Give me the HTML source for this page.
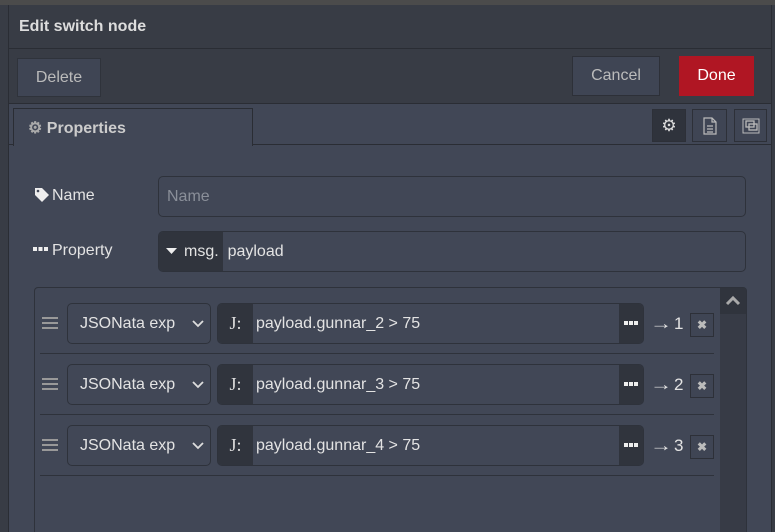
<!DOCTYPE html><html><head><style>
*{box-sizing:border-box;margin:0;padding:0}
body{width:775px;height:532px;overflow:hidden;background:#414756;font-family:"Liberation Sans",sans-serif;color:#ddd;position:relative}
.a{position:absolute}
.btn{position:absolute;border:1px solid #2d3038;background:#3f4554;color:#bbb;font-size:16px;display:flex;align-items:center;justify-content:center}
.inp{position:absolute;border:1px solid #2e323b;border-radius:5px;background:#414756}
.lbl{position:absolute;font-size:16px;color:#e3e3e3}
.sel{position:absolute;border:1px solid #2e323b;border-radius:5px;font-size:16px;color:#e3e3e3;padding-left:12px;display:flex;align-items:center}
.ib{position:absolute;border:1px solid #2d3038;background:#3f4554;display:flex;align-items:center;justify-content:center}
</style></head><body>
<div class="a" style="left:0;top:0;width:775px;height:5px;background:#4b4b4b"></div>
<div class="a" style="left:0;top:5px;width:9px;height:527px;background:#383c45;border-right:1px solid #2a2d34"></div>
<div class="a" style="left:9px;top:5px;width:762px;height:98px;background:#383c45"></div>
<div class="a" style="left:771px;top:5px;width:4px;height:527px;background:#383c45;border-left:1px solid #2a2d34"></div>
<div class="a" style="left:19px;top:18px;font-size:16px;font-weight:bold;color:#ddd">Edit switch node</div>
<div class="a" style="left:9px;top:48px;width:762px;height:1px;background:#2a2d34"></div>
<div class="btn" style="left:17px;top:58px;width:84px;height:39px;border-color:#2f333b">Delete</div>
<div class="btn" style="left:572px;top:56px;width:88px;height:40px">Cancel</div>
<div class="btn" style="left:679px;top:56px;width:75px;height:40px;background:#b01623;border-color:#b01623;color:#fff">Done</div>
<div class="a" style="left:9px;top:103px;width:762px;height:1px;background:#2a2d34"></div>
<div class="a" style="left:9px;top:144px;width:762px;height:1px;background:#2a2d34"></div>
<div class="a" style="left:13px;top:108px;width:240px;height:38px;background:#414756;border:1px solid #2a2d34;border-bottom:none"></div>
<div class="a" style="left:28px;top:118px;font-size:16px;font-weight:bold;color:#ccc"><span style="color:#aaa">⚙</span> Properties</div>
<div class="ib" style="left:652px;top:109px;width:34px;height:33px;background:#2f333c;color:#ddd;font-size:17px">⚙</div>
<div class="ib" style="left:692px;top:109px;width:35px;height:33px"><svg width="14" height="18" viewBox="0 0 14 18"><path d="M1 1h8l4 4v12H1z M9 1v4h4 M4 9h6M4 12h6M4 15h6" fill="none" stroke="#bbb" stroke-width="1.2"/></svg></div>
<div class="ib" style="left:734px;top:109px;width:33px;height:33px"><svg width="20" height="18" viewBox="0 0 20 18"><rect x="2" y="2" width="16" height="14" fill="none" stroke="#bbb"/><rect x="5" y="4" width="8" height="6" fill="none" stroke="#bbb" stroke-width="1.3"/><rect x="8" y="7" width="8" height="6" fill="none" stroke="#bbb" stroke-width="1.3"/></svg></div>
<svg class="a" style="left:34px;top:187px" width="16" height="16" viewBox="0 0 16 16"><path d="M1 1h7l7 7-7 7-7-7z" fill="#eee"/><circle cx="4" cy="4" r="1.3" fill="#414756"/></svg>
<div class="lbl" style="left:52px;top:187px">Name</div>
<div class="inp" style="left:158px;top:176px;width:588px;height:41px"></div>
<div class="a" style="left:167px;top:188px;font-size:16px;color:#8a8f99">Name</div>
<svg class="a" style="left:33px;top:247px" width="15" height="5"><rect x="0" y="0" width="4" height="4" fill="#eee"/><rect x="5.5" y="0" width="4" height="4" fill="#eee"/><rect x="11" y="0" width="4" height="4" fill="#eee"/></svg>
<div class="lbl" style="left:52px;top:242px">Property</div>
<div class="inp" style="left:158px;top:231px;width:588px;height:41px;overflow:hidden"><div class="a" style="left:0;top:0;width:64px;height:41px;background:#30343d"></div></div>
<svg class="a" style="left:166px;top:248px" width="11" height="7"><path d="M0 0h11L5.5 6z" fill="#eee"/></svg>
<div class="a" style="left:184px;top:243px;font-size:16px;color:#e3e3e3">msg.&nbsp; payload</div>
<div class="a" style="left:34px;top:287px;width:713px;height:245px;border:1px solid #2e323b;border-bottom:none;border-radius:4px 4px 0 0"></div>
<div class="a" style="left:720px;top:288px;width:26px;height:244px;background:#373b46"></div>
<div class="a" style="left:720px;top:288px;width:26px;height:26px;background:#30343d"><svg width="26" height="26"><path d="M7 16l6-6 6 6" fill="none" stroke="#aaa" stroke-width="3"/></svg></div>
<div id="rows"></div>
<script>
var h='';[0,1,2].forEach(function(i){var y=303+i*61;
h+='<div class="a" style="left:42px;top:'+(y+14)+'px;width:16px;height:12px;border-top:2px solid #999;border-bottom:2px solid #999"><div style="margin-top:3px;height:2px;background:#999"></div></div>';
h+='<div class="sel" style="left:67px;top:'+y+'px;width:144px;height:41px">JSONata exp<svg style="position:absolute;right:6px;top:16px" width="12" height="8"><path d="M1 1l5 5 5-5" fill="none" stroke="#ddd" stroke-width="1.8"/></svg></div>';
h+='<div class="inp" style="left:217px;top:'+y+'px;width:427px;height:41px;overflow:hidden"><div class="a" style="left:0;top:0;width:35px;height:41px;background:#30343d;color:#ddd;font-family:Liberation Serif;font-size:18px;text-align:center;line-height:39px">J:</div><div class="a" style="right:0;top:0;width:24px;height:41px;background:#30343d"><svg style="position:absolute;left:5px;top:17px" width="14" height="5"><rect x="0" width="4" height="4" fill="#eee"/><rect x="5" width="4" height="4" fill="#eee"/><rect x="10" width="4" height="4" fill="#eee"/></svg></div></div>';
h+='<div class="a" style="left:256px;top:'+(y+12)+'px;font-size:16px;color:#e3e3e3">payload.gunnar_'+(i+2)+' &gt; 75</div>';
h+='<div class="a" style="left:650px;top:'+(y+11)+'px;font-size:17px;color:#e3e3e3"><span style="display:inline-block;transform:scaleX(1.3);transform-origin:left;margin-right:7px">&rarr;</span>'+(i+1)+'</div>';
h+='<div class="ib" style="left:690px;top:'+(y+10)+'px;width:24px;height:24px;color:#bbb;font-size:12px;font-weight:bold">&#10006;</div>';
h+='<div class="a" style="left:40px;top:'+(y+50)+'px;width:674px;height:1px;background:#2e323b"></div>';});
document.getElementById('rows').innerHTML=h;
</script>
</body></html>
